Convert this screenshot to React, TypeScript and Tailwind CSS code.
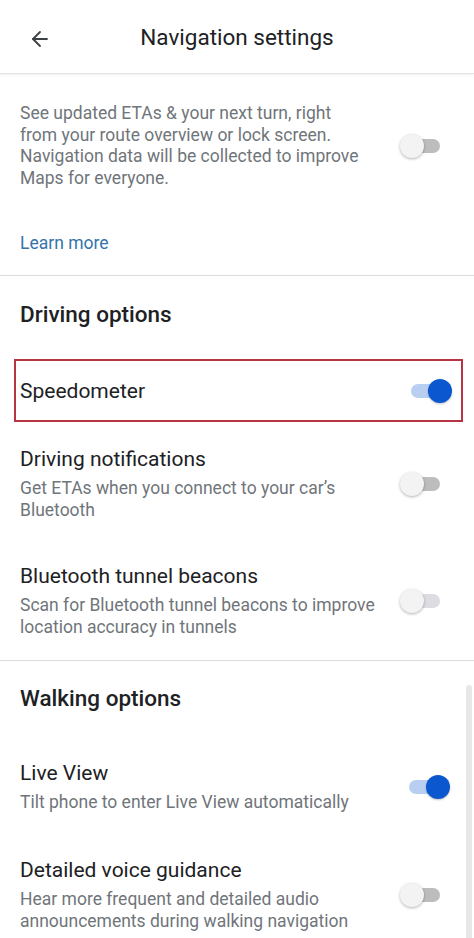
import { ArrowLeft } from "lucide-react";

type SwitchProps = { on?: boolean; faint?: boolean };

function Switch({ on = false, faint = false }: SwitchProps) {
  return (
    <div className="relative w-[50px] h-6 shrink-0">
      <div
        className={
          on
            ? "absolute left-[9px] top-[5px] w-[32px] h-[14px] rounded-full bg-[#b9cff2]"
            : faint
            ? "absolute left-[6px] top-[5px] w-[34px] h-[14px] rounded-full bg-[#dcdce2]"
            : "absolute left-[6px] top-[5px] w-[34px] h-[14px] rounded-full bg-[#bdbdbd]"
        }
      />
      <div
        className={
          on
            ? "absolute left-[26px] top-0 w-6 h-6 rounded-full bg-[#0b57d0] shadow-[0_1px_2px_rgba(0,0,0,0.25)]"
            : "absolute left-0 top-0 w-6 h-6 rounded-full bg-[#f3f3f3] shadow-[0_1px_3px_rgba(0,0,0,0.3)]"
        }
      />
    </div>
  );
}

type RowProps = { title: string; sub?: string; on?: boolean; faint?: boolean; className?: string };

function Row({ title, sub, on, faint, className = "" }: RowProps) {
  return (
    <div className={`flex items-center justify-between pl-5 pr-6 ${className}`}>
      <div className="max-w-[362px]">
        <div className="text-[21px] leading-6 text-[#202124]">{title}</div>
        {sub && <div className="mt-[6px] text-[17.5px] leading-[22px] text-[#70757a]">{sub}</div>}
      </div>
      <Switch on={on} faint={faint} />
    </div>
  );
}

export default function App() {
  return (
    <div className="relative w-[474px] h-[938px] overflow-hidden bg-white font-['Roboto',sans-serif]">
      {/* top bar */}
      <header className="h-[74px] flex items-center relative border-b border-[#e3e3e3] shadow-[0_1px_3px_rgba(0,0,0,0.06)]">
        <ArrowLeft className="absolute left-[28px] top-[27px] w-6 h-6 text-[#3c4043]" strokeWidth={1.8} />
        <h1 className="w-full text-center text-[22.5px] text-[#202124] pt-[2px]">Navigation settings</h1>
      </header>

      {/* intro + learn more */}
      <section className="pt-[29px] pb-[21px] border-b border-[#dadce0]">
        <div className="flex items-center justify-between pl-5 pr-6">
          <p className="w-[345px] text-[17.5px] leading-[21.5px] text-[#70757a]">
            See updated ETAs &amp; your next turn, right from your route overview or lock screen. Navigation data will be
            collected to improve Maps for everyone.
          </p>
          <Switch />
        </div>
        <a className="block mt-[43px] pl-5 text-[17.5px] leading-[22px] text-[#3574ab]">Learn more</a>
      </section>

      {/* driving */}
      <section className="pt-[24px] pb-[22px] border-b border-[#dadce0]">
        <h2 className="pl-5 text-[22.5px] leading-7 font-medium text-[#202124]">Driving options</h2>
        <div className="mt-[31px] ml-[14px] mr-[11px] h-[63px] border-2 border-[#b93443] flex items-center justify-between pl-1 pr-[9px]">
          <span className="text-[21px] leading-6 text-[#202124]">Speedometer</span>
          <Switch on />
        </div>
        <Row className="mt-[25px]" title="Driving notifications" sub="Get ETAs when you connect to your car’s Bluetooth" />
        <Row
          className="mt-[43px]"
          title="Bluetooth tunnel beacons"
          sub="Scan for Bluetooth tunnel beacons to improve location accuracy in tunnels"
          faint
        />
      </section>

      {/* walking */}
      <section className="pt-[23px]">
        <h2 className="pl-5 text-[22.5px] leading-7 font-medium text-[#202124]">Walking options</h2>
        <Row className="mt-[49px]" title="Live View" sub="Tilt phone to enter Live View automatically" on />
        <Row
          className="mt-[45px]"
          title="Detailed voice guidance"
          sub="Hear more frequent and detailed audio announcements during walking navigation"
        />
      </section>

      {/* scroll indicator */}
      <div className="absolute left-[466px] top-[685px] w-[6px] h-[260px] rounded-sm bg-[#e8e8e8]" />
    </div>
  );
}
